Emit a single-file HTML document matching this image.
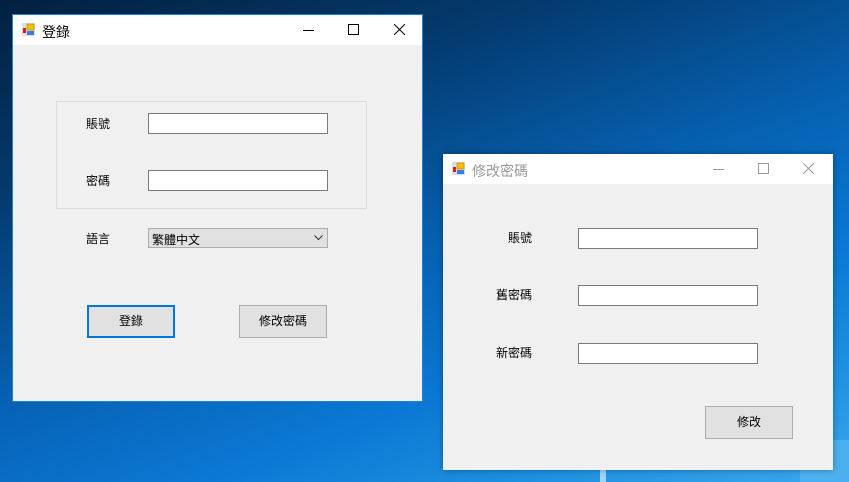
<!DOCTYPE html>
<html><head><meta charset="utf-8"><style>
*{margin:0;padding:0;box-sizing:border-box}
body{width:849px;height:482px;overflow:hidden;position:relative;font-family:"Liberation Sans","Noto Sans CJK TC",sans-serif;font-size:12px;color:#000;
background:linear-gradient(160deg,#02203f 0%,#043a6e 25%,#0660b0 50%,#0a78d4 70%,#1e90e0 85%,#3aa8ee 100%);}
.beam{position:absolute}
.win{position:absolute;background:#f0f0f0}
.tb{position:absolute;left:0;top:0;right:0;height:30px;background:#fff}
.ab{position:absolute}
.tx{position:absolute;height:21px;background:#fff;border:1px solid #7a7a7a}
.btn{position:absolute;background:#e1e1e1;border:1px solid #adadad;text-align:center;line-height:30px;font-size:12px}
.lbl{position:absolute;font-size:12px;line-height:14px}
.icon{position:absolute;width:13px;height:13px}
</style></head><body>
<div class="beam" style="left:600px;top:455px;width:6px;height:27px;background:#9fd4ff"></div>
<div class="beam" style="left:800px;top:440px;width:49px;height:42px;background:#4ab0f0"></div>

<!-- window 1 -->
<div class="win" style="left:12px;top:14px;width:411px;height:388px;border:1px solid #1883d7">
 <div class="tb">
  <svg class="icon" style="left:9px;top:8px" viewBox="0 0 13 13"><rect x="0" y="0" width="13" height="13" fill="#ddd"/><rect x="5" y="1" width="7" height="6" fill="#f5c000" stroke="#b08000" stroke-width=".6"/><rect x="1" y="5" width="3" height="5" fill="#d02020"/><rect x="5" y="8" width="7" height="4" fill="#3a7ae0"/></svg>
  <div class="ab" style="left:29px;top:7px;font-size:14px">登錄</div>
  <div class="ab" style="left:290px;top:15px;width:11px;height:1px;background:#000"></div>
  <div class="ab" style="left:335px;top:9px;width:11px;height:11px;border:1px solid #000"></div>
  <svg class="ab" style="left:381px;top:9px" width="11" height="11"><path d="M0 0L11 11M11 0L0 11" stroke="#000" stroke-width="1"/></svg>
 </div>
 <div class="ab" style="left:43px;top:86px;width:311px;height:108px;border:1px solid #dcdcdc"></div>
 <div class="lbl" style="left:73px;top:102px">賬號</div>
 <div class="tx" style="left:135px;top:98px;width:180px"></div>
 <div class="lbl" style="left:73px;top:159px">密碼</div>
 <div class="tx" style="left:135px;top:155px;width:180px"></div>
 <div class="lbl" style="left:73px;top:217px">語言</div>
 <div class="ab" style="left:135px;top:213px;width:180px;height:20px;background:#e1e1e1;border:1px solid #adadad">
  <div class="ab" style="left:3px;top:2px">繁體中文</div>
  <svg class="ab" style="left:165px;top:6px" width="9" height="6"><path d="M0.5 0.5L4.5 4.5L8.5 0.5" fill="none" stroke="#333"/></svg>
 </div>
 <div class="btn" style="left:74px;top:290px;width:88px;height:33px;border:2px solid #0078d7;line-height:29px">登錄</div>
 <div class="btn" style="left:226px;top:290px;width:88px;height:33px">修改密碼</div>
</div>

<!-- window 2 -->
<div class="win" style="left:443px;top:154px;width:390px;height:316px;box-shadow:0 0 6px rgba(0,0,0,.35)">
 <div class="tb">
  <svg class="icon" style="left:9px;top:8px" viewBox="0 0 13 13"><rect x="0" y="0" width="13" height="13" fill="#ddd"/><rect x="5" y="1" width="7" height="6" fill="#f5c000" stroke="#b08000" stroke-width=".6"/><rect x="1" y="5" width="3" height="5" fill="#d02020"/><rect x="5" y="8" width="7" height="4" fill="#3a7ae0"/></svg>
  <div class="ab" style="left:29px;top:7px;font-size:14px;color:#999">修改密碼</div>
  <div class="ab" style="left:270px;top:15px;width:11px;height:1px;background:#999"></div>
  <div class="ab" style="left:315px;top:9px;width:11px;height:11px;border:1px solid #999"></div>
  <svg class="ab" style="left:360px;top:9px" width="11" height="11"><path d="M0 0L11 11M11 0L0 11" stroke="#999" stroke-width="1"/></svg>
 </div>
 <div class="lbl" style="left:40px;top:77px;width:49px;text-align:right">賬號</div>
 <div class="tx" style="left:135px;top:74px;width:180px"></div>
 <div class="lbl" style="left:40px;top:134px;width:49px;text-align:right">舊密碼</div>
 <div class="tx" style="left:135px;top:131px;width:180px"></div>
 <div class="lbl" style="left:40px;top:192px;width:49px;text-align:right">新密碼</div>
 <div class="tx" style="left:135px;top:189px;width:180px"></div>
 <div class="btn" style="left:262px;top:252px;width:88px;height:33px">修改</div>
</div>
</body></html>
